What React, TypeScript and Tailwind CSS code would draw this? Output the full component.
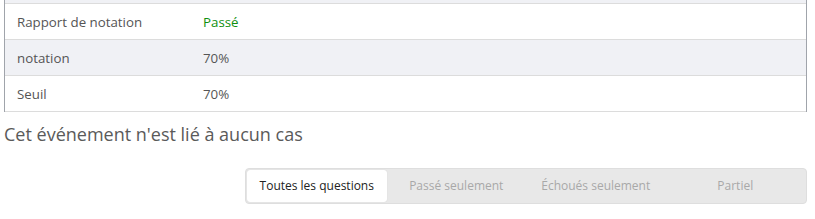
export default function App() {
  const rows = [
    { label: "Rapport de notation", value: "Passé", green: true, bg: "bg-white" },
    { label: "notation", value: "70%", green: false, bg: "bg-[#f0f1f5]" },
    { label: "Seuil", value: "70%", green: false, bg: "bg-white" },
  ];
  const tabs = ["Toutes les questions", "Passé seulement", "Échoués seulement", "Partiel"];

  return (
    <div className="w-[815px] h-[219px] bg-white font-['Open_Sans',sans-serif] text-[#555]">
      <div className="ml-[4px] w-[803px] border-x border-l-[#a0a4ab] border-r-[#a0a4ab]">
        <div className="h-[4px] bg-[#f0f1f5] border-b border-[#dcdcdc]" />
        {rows.map((r) => (
          <div key={r.label} className={`flex items-center h-[36px] pt-[2px] border-b border-[#dcdcdc] ${r.bg} text-[13.3px]`}>
            <div className="w-[198px] pl-[12px]">{r.label}</div>
            <div className={r.green ? "text-[#0f8f0f]" : ""}>{r.value}</div>
          </div>
        ))}
      </div>
      <div className="pl-[4px] pt-[10px] text-[18px] leading-[24px] text-[#5a5a5a]">Cet événement n'est lié à aucun cas</div>
      <div className="flex justify-end pr-[8px] mt-[22px]">
        <div className="flex w-[562px] h-[36px] p-px bg-[#e8e8e8] border border-[#dedede] rounded-[4px]">
          {tabs.map((t, i) => (
            <div
              key={t}
              className={`flex-1 flex items-center justify-center text-[12px] rounded-[3px] ${
                i === 0 ? "bg-white text-[#222] shadow-[0_0_1px_rgba(0,0,0,0.15)]" : "text-[#a8a8a8]"
              }`}
            >
              {t}
            </div>
          ))}
        </div>
      </div>
    </div>
  );
}
